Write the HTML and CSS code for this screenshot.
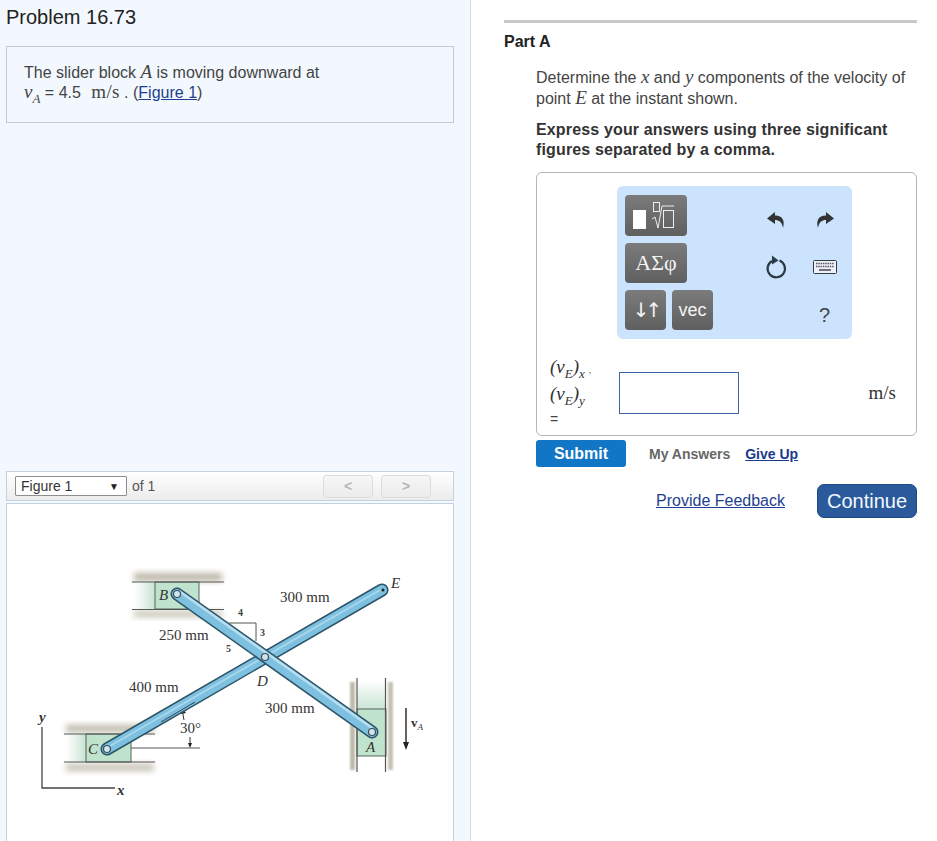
FILE: index.html
```html
<!DOCTYPE html>
<html lang="en">
<head>
<meta charset="utf-8">
<title>Problem 16.73</title>
<link rel="stylesheet" href="styles.css">
</head>
<body>
<div class="page">
  <aside class="left">
    <h1 class="title">Problem 16.73</h1>
    <div class="desc">
      <p>The slider block <i class="m big">A</i> is moving downward at<br>
      <i class="m">v<sub>A</sub></i> = 4.5 <span class="m unit">m/s</span> . (<a href="#">Figure 1</a>)</p>
    </div>
    <div class="figbar">
      <div class="figsel"><span>Figure 1</span><span class="caret">▼</span></div>
      <span class="of">of 1</span>
      <div class="pager">
        <button class="pg">&lt;</button>
        <button class="pg">&gt;</button>
      </div>
    </div>
    <div class="figure">
      <svg class="diagram" viewBox="7 504 446 337" width="446" height="337" aria-label="Mechanism diagram">
        <defs>
          <filter id="soft" x="-20%" y="-60%" width="140%" height="220%"><feGaussianBlur stdDeviation="3"/></filter>
          <filter id="soft1" x="-20%" y="-20%" width="140%" height="140%"><feGaussianBlur stdDeviation="1.2"/></filter>
          <linearGradient id="fadeL" x1="0" x2="1" y1="0" y2="0"><stop offset="0" stop-color="#fff"/><stop offset="1" stop-color="#c9e4d3"/></linearGradient>
          <linearGradient id="fadeT" x1="0" x2="0" y1="0" y2="1"><stop offset="0" stop-color="#fff"/><stop offset="1" stop-color="#c9e4d3"/></linearGradient>
        </defs>
        <!-- B slider -->
        <rect x="134" y="573" width="88" height="8" fill="#b9b5a4" filter="url(#soft)"/>
        <rect x="134" y="611" width="88" height="6" fill="#c4c1b2" filter="url(#soft)"/>
        <rect x="134" y="582" width="21" height="27" fill="url(#fadeL)"/>
        <rect x="155" y="582" width="44" height="27" fill="#bfe3cd" stroke="#55635c" stroke-width="1"/>
        <path d="M132 582H224M132 609.5H224" stroke="#555" stroke-width="1.2"/>
        <!-- C slider -->
        <rect x="66" y="725" width="88" height="7" fill="#b9b5a4" filter="url(#soft)"/>
        <rect x="66" y="764" width="88" height="7" fill="#c4c1b2" filter="url(#soft)"/>
        <rect x="66" y="734" width="20" height="28" fill="url(#fadeL)"/>
        <rect x="86" y="734" width="45" height="28" fill="#bfe3cd" stroke="#55635c" stroke-width="1"/>
        <path d="M64 734H155M64 762H155" stroke="#555" stroke-width="1.2"/>
        <!-- A slider -->
        <rect x="350" y="682" width="5" height="88" fill="#bdb9a8" filter="url(#soft1)"/>
        <rect x="388" y="682" width="5" height="88" fill="#c4c1b2" filter="url(#soft1)"/>
        <rect x="357" y="680" width="29" height="29" fill="url(#fadeT)"/>
        <rect x="357" y="709" width="29" height="47" fill="#bfe3cd" stroke="#55635c" stroke-width="1"/>
        <path d="M357 678V772M385.500 678V772" stroke="#555" stroke-width="1.2"/>
        <!-- dimensions -->
        <path d="M131 748H200" stroke="#555" stroke-width="1"/>
        <path d="M229 623H256V641" stroke="#555" fill="none" stroke-width="1"/>
        <path d="M42 727V788H115" stroke="#444" fill="none" stroke-width="1.3"/>
        <path d="M190 737V746M182 709L184 720" stroke="#333" fill="none" stroke-width="1"/>
        <path d="M188 743L190 748L192 743ZM180 714L182 708L186 713Z" fill="#222"/>
        <path d="M406 708V744" stroke="#222" stroke-width="1.4"/>
        <path d="M403 742H409L406 750Z" fill="#222"/>
        <!-- bars -->
        <path d="M107 749L382 590" stroke="#2d5468" stroke-width="13" stroke-linecap="round"/>
        <path d="M107 749L382 590" stroke="#7ec0df" stroke-width="10" stroke-linecap="round"/>
        <path d="M110 746L380 590" stroke="#a9d6ea" stroke-width="2"/>
        <path d="M161 722L195 702" stroke="#345" stroke-width="1"/>
        <path d="M177 594L372 732" stroke="#2d5468" stroke-width="13" stroke-linecap="round"/>
        <path d="M177 594L372 732" stroke="#7ec0df" stroke-width="10" stroke-linecap="round"/>
        <path d="M179 591L372 728" stroke="#b8deef" stroke-width="2.500"/>
        <circle cx="383" cy="590" r="1.500" fill="#222"/>
        <!-- pins -->
        <g fill="#cfe6ee" stroke="#3c4c55" stroke-width="1.200">
          <circle cx="177" cy="594" r="3.500"/>
          <circle cx="107" cy="749" r="3.500"/>
          <circle cx="265" cy="657" r="3.500"/>
          <circle cx="372" cy="732" r="3.500"/>
        </g>
        <!-- labels -->
        <g class="dg">
          <text x="159" y="640">250 mm</text>
          <text x="129" y="692">400 mm</text>
          <text x="280" y="602">300 mm</text>
          <text x="265" y="713">300 mm</text>
          <text x="180" y="733">30°</text>
        </g>
        <g class="dgi">
          <text x="159" y="600">B</text>
          <text x="88" y="754">C</text>
          <text x="257" y="686">D</text>
          <text x="391" y="588">E</text>
          <text x="366" y="752">A</text>
        </g>
        <g class="dgs">
          <text x="238" y="616">4</text>
          <text x="260" y="636">3</text>
          <text x="226" y="652">5</text>
        </g>
        <text class="axis" x="39" y="722">y</text>
        <text class="axis" x="117" y="795">x</text>
        <text class="va" x="411" y="727">v<tspan class="vasub" dy="3">A</tspan></text>
      </svg>
    </div>
  </aside>

  <main class="right">
    <div class="rule"></div>
    <h2 class="part">Part A</h2>
    <div class="prompt">
      <p>Determine the <i class="m">x</i> and <i class="m">y</i> components of the velocity of point <i class="m big">E</i> at the instant shown.</p>
      <p class="strong">Express your answers using three significant figures separated by a comma.</p>
    </div>
    <section class="answer">
      <div class="tools">
        <div class="tool-left">
          <button class="tbtn wide">
            <svg width="62" height="41" viewBox="0 0 62 41">
              <rect x="8" y="15" width="13" height="19" fill="#fff"/>
              <path d="M27 24l3-2 3 11 4-22H49" fill="none" stroke="#eee" stroke-width="1"/>
              <rect x="28.500" y="7.500" width="6" height="9" fill="none" stroke="#eee"/>
              <rect x="38.500" y="15.500" width="10" height="17" fill="none" stroke="#eee"/>
            </svg>
          </button>
          <button class="tbtn wide greek">ΑΣφ</button>
          <div class="tool-row">
            <button class="tbtn small arrows">↓↑</button>
            <button class="tbtn small vec">vec</button>
          </div>
        </div>
        <div class="tool-right">
          <svg class="ic" width="24" height="24" viewBox="0 0 24 24"><path d="M11 5L3 11.500L11 17V13C15 13 18 15 19 21C21 14 19 8.500 11 8.500Z" fill="#333"/></svg>
          <svg class="ic" width="24" height="24" viewBox="0 0 24 24"><path d="M13 5L21 11.500L13 17V13C9 13 6 15 5 21C3 14 5 8.500 13 8.500Z" fill="#333"/></svg>
          <svg class="ic" width="26" height="28" viewBox="0 0 26 28"><path d="M16.500 7.500A8.700 8.700 0 1 1 9 8" fill="none" stroke="#2b3a44" stroke-width="2.200"/><path d="M9 2.500L15.500 7.500L9 11.500Z" fill="#2b3a44"/></svg>
          <svg class="ic" width="26" height="18" viewBox="0 0 26 18"><rect x="1.500" y="2.500" width="23" height="13" rx="1" fill="#eef2f6" stroke="#2f3b45"/><path d="M4 5.500H22M4 8.500H22" stroke="#556" stroke-width="1.500" stroke-dasharray="1.500 .8"/><path d="M7 12H19" stroke="#445" stroke-width="1.500"/></svg>
          <span class="ic"></span>
          <span class="ic help">?</span>
        </div>
      </div>
      <div class="entry">
        <div class="elabel">
          <span class="m v">(v<sub>E</sub>)<sub>x</sub></span> <span class="comma">,</span><br>
          <span class="m v">(v<sub>E</sub>)<sub>y</sub></span><br>
          <span class="eq">=</span>
        </div>
        <div class="einput"></div>
        <div class="eunit m">m/s</div>
      </div>
    </section>
    <div class="actions">
      <button class="submit">Submit</button>
      <span class="my">My Answers</span>
      <a class="giveup" href="#">Give Up</a>
    </div>
    <div class="footer">
      <a href="#">Provide Feedback</a>
      <button class="continue">Continue</button>
    </div>
  </main>
</div>
</body>
</html>
```

FILE: styles.css
```css
* { box-sizing: border-box; }
html, body { margin: 0; height: 100%; overflow: hidden; background: #fff; }
body { font-family: "Liberation Sans", Arial, sans-serif; color: #444; font-size: 16px; }
button { font-family: inherit; }
.page { display: flex; height: 841px; }

.left { width: 471px; flex: none; background: #f3f8fe; border-right: 1px solid #d5dbe2; padding: 0 16px 0 6px; }
.title { margin: 0; padding-top: 5px; height: 46px; font-size: 20px; font-weight: 400; line-height: 24px; color: #222; }
.desc { height: 77px; border: 1px solid #c2ccd9; padding: 16px 17px; }
.desc p { margin: 0; line-height: 20px; }
a { color: #1e3f8f; }
.m { font-family: "Liberation Serif", "DejaVu Serif", serif; }
.big { font-size: 21px; line-height: 16px; }
.unit { font-style: normal; font-size: 19px; padding-left: 6px; line-height: 16px; letter-spacing: .3px; }
i.m { font-size: 19px; line-height: 16px; }
sub { font-size: 13px; line-height: 0; }

.figbar { margin-top: 348px; height: 30px; border: 1px solid #c3d0de; border-bottom-color: #c3d0de; background: linear-gradient(#fff, #ececec); display: flex; align-items: center; padding-left: 8px; color: #555; font-size: 14px; }
.figsel { width: 112px; height: 20px; background: #fff; border: 1px solid #8e8e8e; border-radius: 1px; display: flex; justify-content: space-between; align-items: center; padding: 0 7px 0 5px; color: #333; }
.caret { font-size: 10px; color: #222; }
.of { margin-left: 5px; }
.pager { margin-left: auto; margin-right: 22px; display: flex; gap: 8px; }
.pg { width: 50px; height: 23px; border: 1px solid #dcdcdc; border-radius: 3px; background: linear-gradient(#f6f6f6, #ececec); color: #b5b5b5; font-weight: 700; font-size: 14px; padding: 0; }
.figure { margin-top: 2px; height: 338px; background: #fff; border: 1px solid #c3d0de; border-bottom: 0; }
.diagram { display: block; }
.dg text { font: 15px "Liberation Serif", serif; fill: #333; }
.dgi text { font: italic 15px "Liberation Serif", serif; fill: #333; }
.dgs text { font: 700 10px "Liberation Serif", serif; fill: #444; }
.axis { font: italic 700 15px "Liberation Serif", serif; fill: #333; }
.va { font: 700 13px "Liberation Serif", serif; fill: #333; }
.vasub { font: italic 9px "Liberation Serif", serif; }

.right { width: 466px; padding: 20px 20px 0 33px; }
.rule { height: 3px; background: #c8c8c8; }
.part { margin: 9px 0 0; font-size: 16px; line-height: 20px; font-weight: 700; color: #222; }
.prompt { margin: 15px 0 0 32px; }
.prompt p { margin: 0; line-height: 21px; }
.prompt .strong { margin-top: 11px; font-weight: 700; line-height: 20px; color: #333; letter-spacing: .15px; }
.answer { margin: 12px 0 0 32px; height: 264px; border: 1px solid #b5b5b5; border-radius: 6px; padding-top: 13px; }
.tools { width: 235px; height: 153px; margin-left: 80px; background: #cce3fd; border-radius: 6px; display: flex; padding: 9px 8px; }
.tool-left { display: flex; flex-direction: column; gap: 7px; width: 89px; }
.tool-row { display: flex; gap: 6px; }
.tbtn { display: flex; align-items: center; justify-content: center; padding: 0; border: 0; border-radius: 4px; height: 41px; background: linear-gradient(#7b7b7b, #5f5f5f); color: #f3f3f3; }
.wide { width: 62px; }
.small { width: 41px; height: 40px; }
.greek { font: 22px "Liberation Serif", serif; }
.arrows { font: 20px "DejaVu Sans", sans-serif; letter-spacing: -4px; }
.vec { font-size: 18px; }
.tool-right { margin-left: 38px; display: grid; grid-template-columns: 49px 49px; grid-auto-rows: 48px; justify-items: center; align-items: center; }
.help { font-size: 20px; color: #444; }

.entry { display: flex; align-items: center; margin-top: 16px; padding-left: 13px; position: relative; }
.elabel { width: 69px; font-size: 14px; line-height: 24px; }
.v { font-size: 19px; font-style: italic; color: #333; }
.comma { font-size: 9px; }
.eq { font-size: 14px; }
.einput { width: 120px; height: 42px; border: 1px solid #3b64a0; background: #fff; }
.eunit { margin-left: auto; margin-right: 20px; font-size: 19px; color: #333; }

.actions { display: flex; align-items: center; margin: 4px 0 0 32px; height: 27px; font-size: 14px; font-weight: 700; }
.submit { width: 90px; height: 27px; border: 0; border-radius: 3px; background: #1276c7; color: #fff; font-size: 16px; font-weight: 700; padding: 0; }
.my { margin-left: 23px; color: #666; }
.giveup { margin-left: 15px; color: #1a3a8e; }
.footer { display: flex; justify-content: flex-end; align-items: center; gap: 32px; margin-top: 17px; }
.footer .continue { width: 100px; height: 34px; background: #2a5a9b; border: 1px solid #1f4a86; border-radius: 7px; color: #f4f8fd; font-size: 20px; padding: 0; }
```
